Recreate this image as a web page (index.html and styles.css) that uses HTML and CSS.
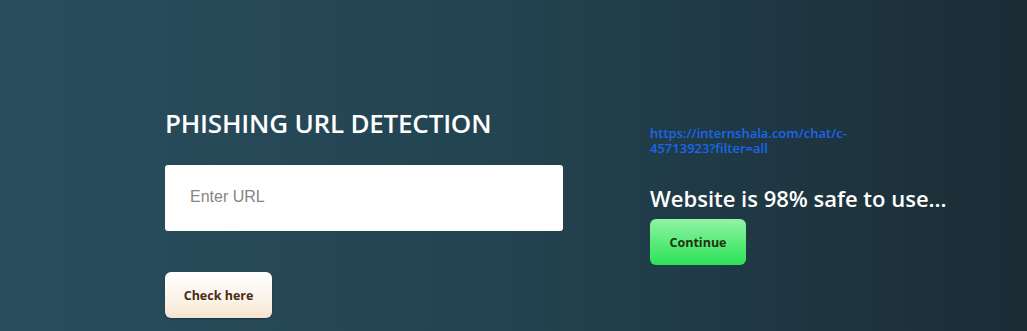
FILE: index.html
```html
<!DOCTYPE html>
<html>
<head>
<meta charset="utf-8">
<link rel="stylesheet" href="styles.css">
</head>
<body>
<main class="page">
  <section class="left">
    <h1 class="title">PHISHING URL DETECTION</h1>
    <input class="url-input" type="text" placeholder="Enter URL">
    <button class="check-btn">Check here</button>
  </section>
  <section class="right">
    <a class="result-link" href="#">https://internshala.com/chat/c-45713923?filter=all</a>
    <h2 class="verdict">Website is 98% safe to use...</h2>
    <button class="continue-btn">Continue</button>
  </section>
</main>
</body>
</html>
```
FILE: styles.css
```css
html, body {
  margin: 0;
  padding: 0;
  height: 100%;
}
body {
  background: linear-gradient(90deg, #2a4d5e 0%, #234552 45%, #1b2c35 100%);
  font-family: "Open Sans", "Noto Sans", sans-serif;
  overflow: hidden;
}
.page {
  display: flex;
  padding-left: 165px;
  padding-top: 106px;
}
.left {
  width: 398px;
  display: flex;
  flex-direction: column;
  align-items: flex-start;
}
.title {
  margin: 0;
  color: #ffffff;
  font-size: 26px;
  font-weight: 600;
  line-height: 34px;
  letter-spacing: -0.2px;
}
.url-input {
  margin-top: 25px;
  width: 398px;
  height: 66px;
  box-sizing: border-box;
  border: none;
  border-radius: 3px;
  background: #ffffff;
  padding: 0 25px 2px;
  font-family: "Liberation Sans", Arial, sans-serif;
  font-size: 16px;
  outline: none;
}
.url-input::placeholder {
  color: #858585;
}
.check-btn {
  margin-top: 41px;
  width: 107px;
  height: 46px;
  border: none;
  border-radius: 6px;
  background: linear-gradient(180deg, #ffffff 0%, #fbf3e8 60%, #f5e4cf 100%);
  color: #4a2a12;
  font-family: "Open Sans", sans-serif;
  font-weight: 700;
  font-size: 12.5px;
  box-shadow: 0 1px 2px rgba(0,0,0,0.25);
  padding: 0;
}
.right {
  margin-left: 87px;
  padding-top: 20px;
  display: flex;
  flex-direction: column;
  align-items: flex-start;
}
.result-link {
  width: 215px;
  color: #1a66ec;
  text-decoration: none;
  font-size: 13px;
  font-weight: 600;
  line-height: 15px;
}
.verdict {
  margin: 29px 0 0;
  color: #ffffff;
  font-size: 22px;
  font-weight: 600;
  line-height: 26px;
}
.continue-btn {
  margin-top: 8px;
  width: 96px;
  height: 46px;
  border: none;
  border-radius: 6px;
  background: linear-gradient(180deg, #92f3a6 0%, #5ceb7c 50%, #2fe058 100%);
  color: #1f3311;
  font-family: "Open Sans", sans-serif;
  font-weight: 700;
  font-size: 12.5px;
  padding: 0;
}
```
